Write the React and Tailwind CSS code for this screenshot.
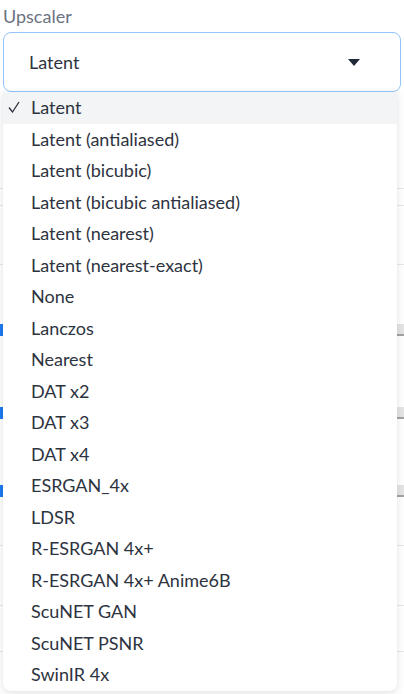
const options = [
  "Latent",
  "Latent (antialiased)",
  "Latent (bicubic)",
  "Latent (bicubic antialiased)",
  "Latent (nearest)",
  "Latent (nearest-exact)",
  "None",
  "Lanczos",
  "Nearest",
  "DAT x2",
  "DAT x3",
  "DAT x4",
  "ESRGAN_4x",
  "LDSR",
  "R-ESRGAN 4x+",
  "R-ESRGAN 4x+ Anime6B",
  "ScuNET GAN",
  "ScuNET PSNR",
  "SwinIR 4x",
];

function Slider({ top }) {
  return (
    <div className={`flex items-center justify-between ${top}`}>
      <div className="h-[12px] w-[40px] bg-[#1d7bf5]" />
      <div className="h-[12px] w-[40px] border-b-2 border-[#a3a3a3] bg-[#e5e5e5]" />
    </div>
  );
}

export default function App() {
  return (
    <div
      className="relative h-[694px] w-[404px] overflow-hidden bg-white text-[#2d3340]"
      style={{ fontFamily: "Lato, 'Noto Sans', sans-serif" }}
    >
      <div className="px-[3px] pt-[4px]">
        <div className="text-[18px] leading-[24px] text-[#6b7280]">Upscaler</div>
        <div className="mt-[4px] flex h-[60px] items-center justify-between rounded-lg border border-[#93c5fd] pl-[25px] pr-[40px]">
          <span className="text-[18px]">Latent</span>
          <svg width="12" height="7" viewBox="0 0 12 7">
            <path d="M0 0 L12 0 L6 7 Z" fill="#1f2937" />
          </svg>
        </div>
      </div>

      {/* page content behind the open list */}
      <div className="flex flex-col">
        <div className="mt-[96px] border-t border-[#e5e7eb]" />
        <div className="mt-[16px] border-t border-[#e5e7eb]" />
        <div className="mt-[58px] border-t border-[#e5e7eb]" />
        <Slider top="mt-[59px]" />
        <Slider top="mt-[71px]" />
        <Slider top="mt-[66px]" />
        <div className="mt-[48px] border-t border-[#e5e7eb]" />
        <div className="mt-[59px] border-t border-[#e5e7eb]" />
        <div className="mt-[45px] border-t border-[#e5e7eb]" />
      </div>

      <ul className="absolute left-[3px] top-[92px] w-[394px] overflow-hidden rounded-b-lg bg-white shadow-[0_2px_8px_rgba(0,0,0,0.12)]">
        {options.map((o, i) => (
          <li
            key={o}
            className={`relative flex h-[31.5px] items-center pl-[28px] text-[18px] ${
              i === 0 ? "bg-[#f3f4f6]" : ""
            }`}
          >
            {i === 0 && (
              <svg className="absolute left-[5px] top-[9px]" width="12" height="12" viewBox="0 0 12 12">
                <path d="M1 6.5 L4.5 11 L11 1" fill="none" stroke="#2d3340" strokeWidth="1.3" />
              </svg>
            )}
            {o}
          </li>
        ))}
      </ul>
    </div>
  );
}
